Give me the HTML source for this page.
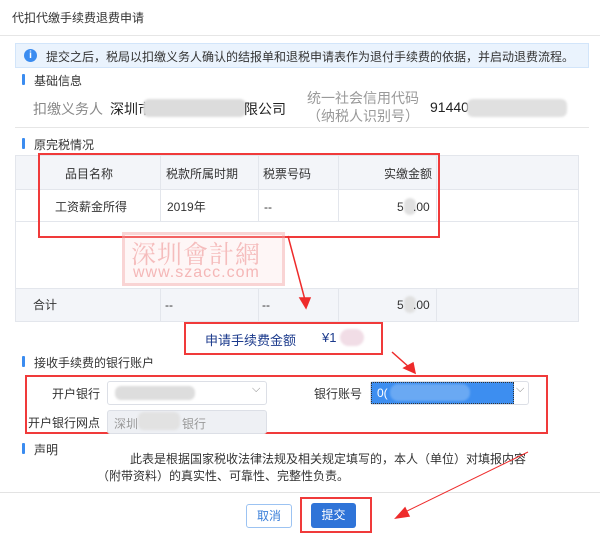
<!DOCTYPE html>
<html><head><meta charset="utf-8"><style>
*{margin:0;padding:0;box-sizing:border-box}
body{width:600px;height:539px;background:#fff;position:relative;overflow:hidden;font-family:"Liberation Sans","Noto Sans CJK SC",sans-serif;color:#333;font-size:12px}
.a{position:absolute;white-space:nowrap}
.bar{position:absolute;left:22px;width:3px;height:11px;background:#3b8cf0;border-radius:1px}
.sec{position:absolute;left:34px;font-size:12px;color:#333}
.red{position:absolute;border:2px solid #f03a3a}
.cell{position:absolute;font-size:12px;line-height:14px}
.sel{position:absolute;border:1px solid #dcdfe6;border-radius:3px;background:#fff}
.blur{position:absolute;background:#d8d8d8;border-radius:6px;filter:blur(1px)}
</style></head><body>
<div class="a" style="left:12px;top:9px;font-size:12px;color:#333">代扣代缴手续费退费申请</div>
<div class="a" style="left:0;top:35px;width:600px;height:1px;background:#e6e6e6"></div>
<div class="a" style="left:15px;top:43px;width:574px;height:25px;background:#eaf3fd;border:1px solid #d2e5fa"></div>
<div class="a" style="left:24px;top:49px;width:13px;height:13px;border-radius:50%;background:#3b8cf0;color:#fff;font-size:10px;line-height:13px;text-align:center;font-weight:bold">i</div>
<div class="a" style="left:46px;top:48px;font-size:12px;color:#333">提交之后，税局以扣缴义务人确认的结报单和退税申请表作为退付手续费的依据，并启动退费流程。</div>
<div class="bar" style="top:74px"></div><div class="sec" style="top:72px">基础信息</div>
<div class="a" style="left:33px;top:99px;font-size:14px;color:#888">扣缴义务人</div>
<div class="a" style="left:110px;top:99px;font-size:14px;color:#222">深圳市</div>
<div class="blur" style="left:143px;top:99px;width:103px;height:18px;background:#dcdcdc"></div>
<div class="a" style="left:244px;top:99px;font-size:14px;color:#222">限公司</div>
<div class="a" style="left:307px;top:88px;font-size:14px;color:#999">统一社会信用代码</div>
<div class="a" style="left:307px;top:106px;font-size:14px;color:#999">（纳税人识别号）</div>
<div class="a" style="left:430px;top:99px;font-size:14px;color:#222">91440</div>
<div class="blur" style="left:467px;top:99px;width:100px;height:18px;background:#e0e0e0"></div>
<div class="a" style="left:15px;top:127px;width:574px;height:1px;background:#e6e6e6"></div>
<div class="bar" style="top:138px"></div><div class="sec" style="top:136px">原完税情况</div>
<div class="a" style="left:15px;top:155px;width:564px;height:167px;border:1px solid #e3e6ec;background:#fff"></div>
<div class="a" style="left:15px;top:155px;width:564px;height:35px;background:#f3f5f9;border:1px solid #e3e6ec"></div>
<div class="a" style="left:15px;top:288px;width:564px;height:34px;background:#f3f5f9;border:1px solid #e3e6ec"></div>
<div class="a" style="left:15px;top:221px;width:564px;height:1px;background:#e3e6ec"></div>
<div class="a" style="left:160px;top:155px;width:1px;height:66px;background:#e3e6ec"></div>
<div class="a" style="left:258px;top:155px;width:1px;height:66px;background:#e3e6ec"></div>
<div class="a" style="left:338px;top:155px;width:1px;height:66px;background:#e3e6ec"></div>
<div class="a" style="left:436px;top:155px;width:1px;height:66px;background:#e3e6ec"></div>
<div class="a" style="left:160px;top:288px;width:1px;height:34px;background:#e3e6ec"></div>
<div class="a" style="left:258px;top:288px;width:1px;height:34px;background:#e3e6ec"></div>
<div class="a" style="left:338px;top:288px;width:1px;height:34px;background:#e3e6ec"></div>
<div class="a" style="left:436px;top:288px;width:1px;height:34px;background:#e3e6ec"></div>
<div class="cell a" style="left:65px;top:167px">品目名称</div>
<div class="cell a" style="left:166px;top:167px">税款所属时期</div>
<div class="cell a" style="left:263px;top:167px">税票号码</div>
<div class="cell a" style="left:384px;top:167px">实缴金额</div>
<div class="cell a" style="left:55px;top:200px">工资薪金所得</div>
<div class="cell a" style="left:167px;top:200px">2019年</div>
<div class="cell a" style="left:264px;top:200px">--</div>
<div class="cell a" style="left:397px;top:200px">5</div>
<div class="blur" style="left:404px;top:198px;width:12px;height:17px;background:#e0e0e0"></div>
<div class="cell a" style="left:413px;top:200px">.00</div>
<div class="cell a" style="left:33px;top:298px">合计</div>
<div class="cell a" style="left:165px;top:298px">--</div>
<div class="cell a" style="left:262px;top:298px">--</div>
<div class="cell a" style="left:397px;top:298px">5</div>
<div class="blur" style="left:404px;top:296px;width:12px;height:17px;background:#e0e0e0"></div>
<div class="cell a" style="left:413px;top:298px">.00</div>
<div class="red" style="left:38px;top:153px;width:402px;height:85px"></div>
<div class="a" style="left:122px;top:232px;width:163px;height:54px;border:3px solid rgba(240,150,150,.35);background:rgba(250,220,220,.25)"></div>
<div class="a" style="left:131px;top:235px;font-size:25px;color:rgba(235,120,120,.45);letter-spacing:1px;font-family:'Noto Serif CJK SC',serif">深圳會計網</div>
<div class="a" style="left:133px;top:264px;font-size:16px;color:rgba(235,120,120,.5);letter-spacing:1px">www.szacc.com</div>
<div class="red" style="left:184px;top:322px;width:199px;height:33px"></div>
<div class="a" style="left:205px;top:330px;font-size:13px;color:#1b3a8c">申请手续费金额</div>
<div class="a" style="left:322px;top:330px;font-size:13px;color:#1b3a8c">¥1</div>
<div class="blur" style="left:340px;top:329px;width:24px;height:17px;background:#f1dde6;border-radius:9px"></div>
<div class="bar" style="top:356px"></div><div class="sec" style="top:354px">接收手续费的银行账户</div>
<div class="red" style="left:25px;top:375px;width:523px;height:59px"></div>
<div class="a" style="left:52px;top:385px;font-size:12px">开户银行</div>
<div class="sel" style="left:107px;top:381px;width:160px;height:24px"></div>
<div class="blur" style="left:115px;top:386px;width:80px;height:14px;background:#ddd"></div>
<div class="a" style="left:252px;top:383px;font-size:11px;color:#888">⌵</div>
<div class="a" style="left:314px;top:385px;font-size:12px">银行账号</div>
<div class="sel" style="left:370px;top:381px;width:159px;height:24px"></div>
<div class="a" style="left:371px;top:382px;width:143px;height:22px;background:#3d8ef0;border:1px dotted #333"></div>
<div class="a" style="left:377px;top:386px;font-size:12px;color:#fff">0(</div>
<div class="blur" style="left:390px;top:384px;width:80px;height:17px;background:#6aa9f3;border-radius:8px"></div>
<div class="a" style="left:516px;top:383px;font-size:11px;color:#888">⌵</div>
<div class="a" style="left:28px;top:414px;font-size:12px">开户银行网点</div>
<div class="a" style="left:107px;top:410px;width:160px;height:24px;background:#eef0f4;border:1px solid #dcdfe6;border-radius:3px"></div>
<div class="a" style="left:114px;top:415px;font-size:12px;color:#999">深圳</div>
<div class="blur" style="left:138px;top:412px;width:42px;height:18px;background:#e2e2e2"></div>
<div class="a" style="left:182px;top:415px;font-size:12px;color:#999">银行</div>
<div class="bar" style="top:443px"></div><div class="sec" style="top:441px">声明</div>
<div class="a" style="left:130px;top:450px;font-size:12px">此表是根据国家税收法律法规及相关规定填写的，本人（单位）对填报内容</div>
<div class="a" style="left:97px;top:467px;font-size:12px">（附带资料）的真实性、可靠性、完整性负责。</div>
<div class="a" style="left:0;top:492px;width:600px;height:1px;background:#e3e3e3"></div>
<div class="a" style="left:246px;top:504px;width:46px;height:24px;border:1px solid #9cc3f2;border-radius:3px;color:#3b7fd9;text-align:center;line-height:22px;font-size:12px">取消</div>
<div class="a" style="left:311px;top:503px;width:45px;height:25px;background:#2f74d8;border-radius:3px;color:#fff;text-align:center;line-height:25px;font-size:12px">提交</div>
<div class="red" style="left:300px;top:497px;width:72px;height:36px"></div>
<svg class="a" style="left:0;top:0" width="600" height="539">
<g stroke="#ee2b2b" stroke-width="1.5" fill="#ee2b2b">
<line x1="288" y1="236" x2="305" y2="300"/><polygon points="300,298 310,298 306,308"/>
<line x1="392" y1="352" x2="410" y2="368"/><polygon points="404,368 413,363 415,373"/>
<line x1="528" y1="452" x2="403" y2="513" stroke-width="1"/><polygon points="396,518 405,508 409,516"/>
</g></svg>
</body></html>
